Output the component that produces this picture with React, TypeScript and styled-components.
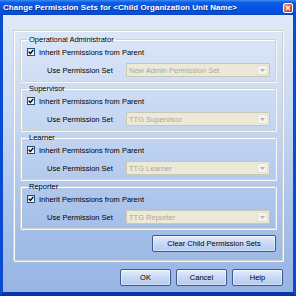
import React from 'react'
import styled, { createGlobalStyle } from 'styled-components'

const GlobalStyle = createGlobalStyle`
  html, body {
    margin: 0;
    padding: 0;
  }
  body {
    width: 296px;
    height: 296px;
    overflow: hidden;
    font-family: 'Liberation Sans', Arial, sans-serif;
    font-size: 7.5px;
    color: #000;
  }
`

const Window = styled.div`
  width: 296px;
  height: 296px;
  display: flex;
  flex-direction: column;
`

const TitleBar = styled.div`
  height: 15px;
  flex: none;
  display: flex;
  align-items: center;
  justify-content: space-between;
  padding: 0 3px 0 3px;
  background: linear-gradient(#3d8bf2 0%, #0a5be6 18%, #0453e2 55%, #0a4ed8 85%, #0744c2 100%);
`

const Title = styled.span`
  color: #fff;
  font-weight: bold;
  font-size: 8px;
  letter-spacing: 0.05px;
  text-shadow: 1px 1px 0 #0a2f8c;
  white-space: nowrap;
`

const CloseButton = styled.div`
  width: 10px;
  height: 10px;
  box-sizing: border-box;
  border: 1px solid #fff;
  border-radius: 2px;
  background: linear-gradient(135deg, #f0a07a, #e0502a 55%, #c8401c);
  display: flex;
  align-items: center;
  justify-content: center;
`

const Frame = styled.div`
  flex: 1;
  display: flex;
  flex-direction: column;
  border: 3px solid #0b4bd2;
  border-top: none;
  border-bottom-width: 4px;
  border-bottom-color: #0636a8;
  padding: 15px 10px 0;
  background: linear-gradient(#dfe9f8 0%, #c4d6f2 40%, #a2bde8 80%, #97b4e4 100%);
`

const OuterGroup = styled.div`
  height: 231px;
  box-sizing: border-box;
  display: flex;
  flex-direction: column;
  gap: 2px;
  padding: 4px 6px 0;
  border: 1px solid #d3d2c6;
  box-shadow: inset 1px 1px 0 #fff, 1px 1px 0 #f4f6fb;
`

const Group = styled.fieldset`
  margin: 0;
  padding: 3px 5px 4px;
  border: 1px solid #d3d2c6;
  box-shadow: inset 1px 1px 0 #fff, 1px 1px 0 #f4f6fb;
  display: flex;
  flex-direction: column;
  gap: 6px;
`

const Legend = styled.legend`
  padding: 0 2px;
  margin-left: 1px;
  line-height: 9px;
  font-size: 7.5px;
  color: #000;
`

const CheckRow = styled.label`
  display: flex;
  align-items: center;
  gap: 4px;
  height: 10px;
  padding-left: 1px;
`

const CheckBox = styled.span`
  width: 8px;
  height: 8px;
  box-sizing: border-box;
  border: 1px solid #1c5180;
  background: linear-gradient(135deg, #e4e3dc, #fff);
  display: flex;
  align-items: center;
  justify-content: center;
`

const SetRow = styled.div`
  display: flex;
  align-items: center;
  height: 14px;
`

const SetLabel = styled.span`
  width: 79px;
  flex: none;
  padding-left: 21px;
  box-sizing: content-box;
  white-space: nowrap;
`

const Combo = styled.div`
  flex: 1;
  height: 14px;
  box-sizing: border-box;
  display: flex;
  align-items: stretch;
  border: 1px solid #c9c7ba;
  background: #ece9d8;
`

const ComboText = styled.span`
  flex: 1;
  display: flex;
  align-items: center;
  padding-left: 2px;
  color: #aca899;
  white-space: nowrap;
  overflow: hidden;
`

const ComboArrow = styled.span`
  width: 11px;
  margin: 1px;
  box-sizing: border-box;
  border: 1px solid #e1ded2;
  background: #f4f3ee;
  display: flex;
  align-items: center;
  justify-content: center;
`

const ClearRow = styled.div`
  display: flex;
  justify-content: flex-end;
  margin-top: 4px;
`

const Button = styled.button<{ $width: number }>`
  width: ${p => p.$width}px;
  height: 17px;
  padding: 0;
  font-family: 'Liberation Sans', Arial, sans-serif;
  font-size: 7.5px;
  color: #000;
  border: 1px solid #3c5a8c;
  border-radius: 2px;
  background: linear-gradient(#e6eefb 0%, #c9daf5 45%, #b5caee 100%);
  box-shadow: inset 0 0 0 1px rgba(255, 255, 255, 0.45);
`

const ButtonRow = styled.div`
  display: flex;
  justify-content: flex-end;
  gap: 5px;
  margin-top: 8px;
  padding-right: 0;
`

const Check = () => (
  <svg width="6" height="6" viewBox="0 0 7 7">
    <path d="M0.8 3.2 L2.8 5.2 L6.2 1" fill="none" stroke="#21a121" strokeWidth="1.6" style={{ stroke: '#000' }} />
  </svg>
)

const Arrow = () => (
  <svg width="5" height="3" viewBox="0 0 5 3">
    <path d="M0 0 H5 L2.5 3 Z" fill="#b6b4a8" />
  </svg>
)

const groups = [
  { role: 'Operational Administrator', set: 'New Admin Permission Set' },
  { role: 'Supervisor', set: 'TTG Supervisor' },
  { role: 'Learner', set: 'TTG Learner' },
  { role: 'Reporter', set: 'TTG Reporter' },
]

export default function App() {
  return (
    <>
      <GlobalStyle />
      <Window>
        <TitleBar>
          <Title>Change Permission Sets for &lt;Child Organization Unit Name&gt;</Title>
          <CloseButton>
            <svg width="6" height="6" viewBox="0 0 6 6">
              <path d="M1 1 L5 5 M5 1 L1 5" stroke="#fff" strokeWidth="1.3" />
            </svg>
          </CloseButton>
        </TitleBar>
        <Frame>
          <OuterGroup>
            {groups.map(g => (
              <Group key={g.role}>
                <Legend>{g.role}</Legend>
                <CheckRow>
                  <CheckBox>
                    <Check />
                  </CheckBox>
                  Inherit Permissions from Parent
                </CheckRow>
                <SetRow>
                  <SetLabel>Use Permission Set</SetLabel>
                  <Combo>
                    <ComboText>{g.set}</ComboText>
                    <ComboArrow>
                      <Arrow />
                    </ComboArrow>
                  </Combo>
                </SetRow>
              </Group>
            ))}
            <ClearRow>
              <Button $width={124}>Clear Child Permission Sets</Button>
            </ClearRow>
          </OuterGroup>
          <ButtonRow>
            <Button $width={51}>OK</Button>
            <Button $width={51}>Cancel</Button>
            <Button $width={51}>Help</Button>
          </ButtonRow>
        </Frame>
      </Window>
    </>
  )
}
